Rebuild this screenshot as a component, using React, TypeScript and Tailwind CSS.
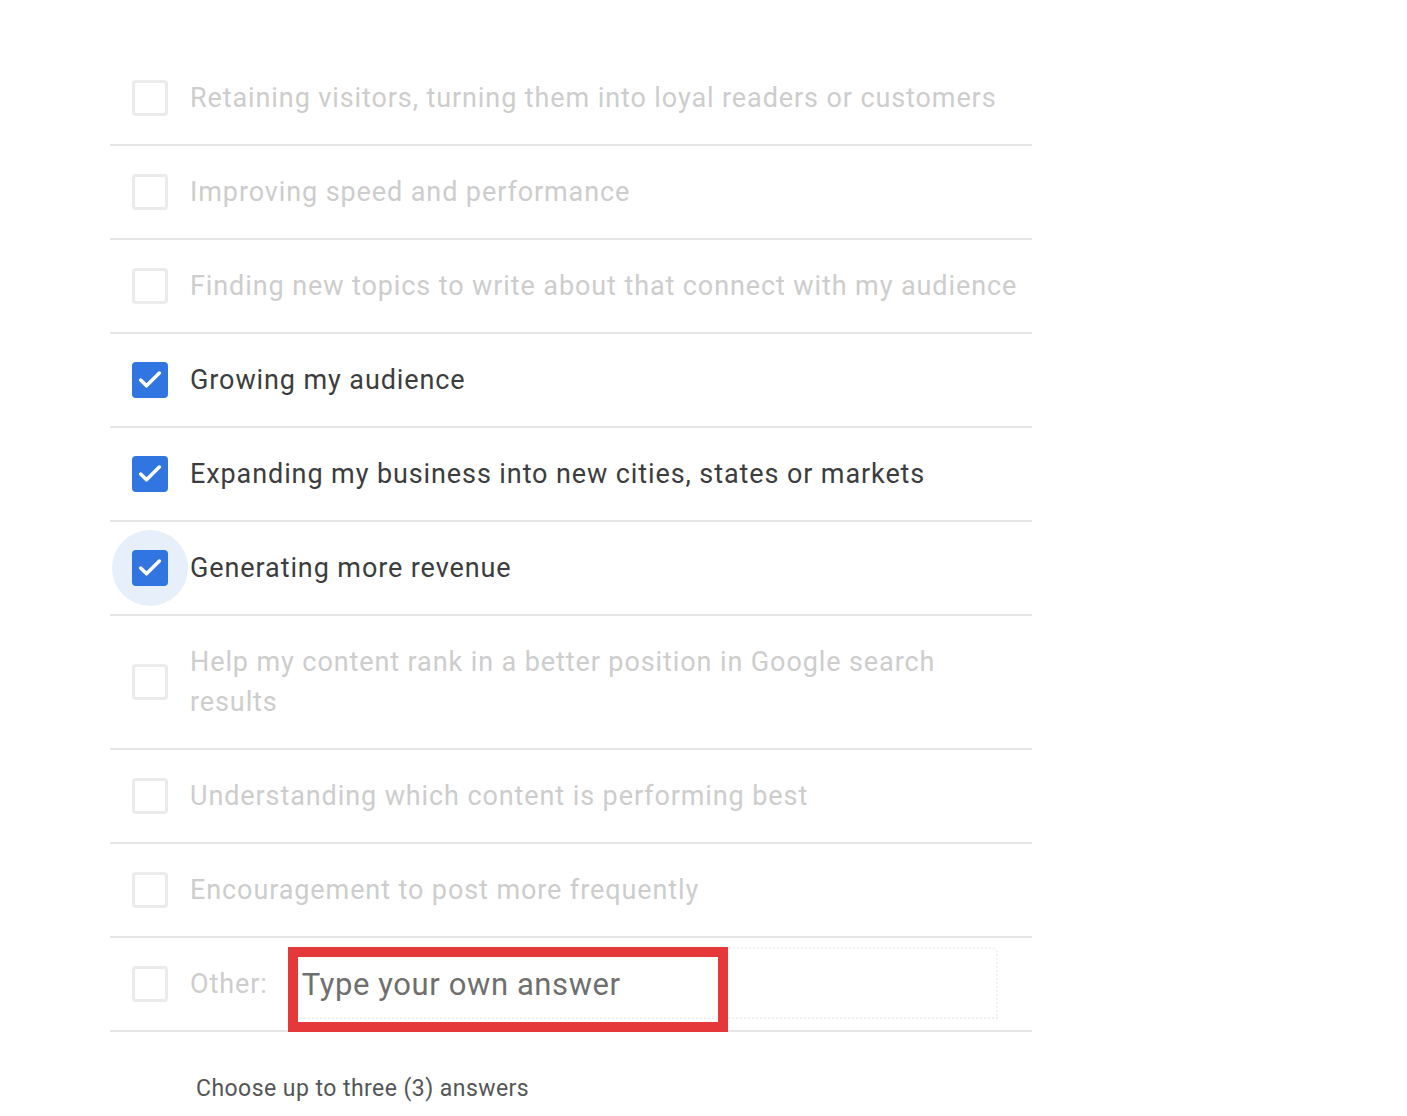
import { Check } from "lucide-react";

type Option = {
  label: string;
  checked?: boolean;
  focused?: boolean;
};

const options: Option[] = [
  { label: "Retaining visitors, turning them into loyal readers or customers" },
  { label: "Improving speed and performance" },
  { label: "Finding new topics to write about that connect with my audience" },
  { label: "Growing my audience", checked: true },
  { label: "Expanding my business into new cities, states or markets", checked: true },
  { label: "Generating more revenue", checked: true, focused: true },
  { label: "Help my content rank in a better position in Google search results" },
  { label: "Understanding which content is performing best" },
  { label: "Encouragement to post more frequently" },
];

function Box({ checked, focused }: { checked?: boolean; focused?: boolean }) {
  return (
    <div className="relative flex h-[36px] w-[36px] shrink-0 items-center justify-center">
      {focused ? (
        <div className="absolute left-1/2 top-1/2 h-[76px] w-[76px] -translate-x-1/2 -translate-y-1/2 rounded-full bg-[#e7effb]" />
      ) : null}
      {checked ? (
        <div className="relative flex h-[36px] w-[36px] items-center justify-center rounded-[4px] bg-[#3075e0]">
          <Check className="h-[28px] w-[28px] text-white" strokeWidth={3} />
        </div>
      ) : (
        <div className="h-[36px] w-[36px] rounded-[4px] border-[3px] border-[#ebebeb] bg-white" />
      )}
    </div>
  );
}

export default function App() {
  return (
    <main
      className="min-h-screen bg-white pt-[52px]"
      style={{ fontFamily: "Roboto, 'Noto Sans', sans-serif" }}
    >
      <div className="ml-[110px] w-[922px]">
        {options.map((option) => (
          <div
            key={option.label}
            className="flex items-center gap-[22px] border-b-2 border-[#e6e6e6] py-[26px] pl-[22px]"
          >
            <Box checked={option.checked} focused={option.focused} />
            <span
              className={
                "max-w-[838px] text-[27px] leading-[40px] tracking-[0.9px] " +
                (option.checked ? "text-[#3c3d3f]" : "text-[#cdcdcd]")
              }
            >
              {option.label}
            </span>
          </div>
        ))}

        <div className="flex h-[94px] items-start border-b-2 border-[#e6e6e6] pl-[22px]">
          <div className="mt-[26px] flex items-center gap-[22px]">
            <Box />
            <span className="text-[27px] leading-[40px] tracking-[0.9px] text-[#cdcdcd]">
              Other:
            </span>
          </div>
          <div className="relative ml-[20px] mt-[9px] h-[72px] w-[710px] rounded-tr-[6px] border-2 border-dotted border-[#f1f1f1]">
            <span className="absolute left-[12px] top-[16px] text-[31px] leading-[40px] tracking-[0.6px] text-[#6f6f6f]">
              Type your own answer
            </span>
            <div className="absolute -left-[2px] -top-[2px] h-[85px] w-[440px] border-[10px] border-[#e5383b]" />
          </div>
        </div>

        <p className="mt-[42px] pl-[86px] text-[23px] leading-[30px] tracking-[0.45px] text-[#555658]">
          Choose up to three (3) answers
        </p>
      </div>
    </main>
  );
}
